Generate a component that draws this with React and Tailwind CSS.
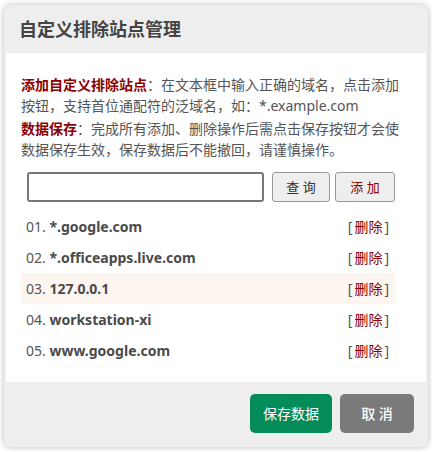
import React from "react";

const items = [
  "*.google.com",
  "*.officeapps.live.com",
  "127.0.0.1",
  "workstation-xi",
  "www.google.com",
];

export default function App() {
  return (
    <div className="w-[432px] h-[452px] bg-white pt-[5px] pl-[4px] font-['Noto_Sans','Noto_Sans_CJK_SC',sans-serif]">
      <div className="w-[424px] h-[442px] bg-[#eeeeee] rounded-[7px] shadow-[0_0_6px_rgba(0,0,0,0.28)] flex flex-col overflow-hidden">
        <div className="h-[48px] flex items-center pl-[15px] text-[18px] font-bold text-[#444444] leading-none">
          自定义排除站点管理
        </div>
        <div className="mx-[2px] bg-white pt-[21px] pb-[16px] pl-[15px] pr-[14px]">
          <p className="text-[14px] leading-[21px] text-[#555555]">
            <span className="text-[#8b0000] font-bold">添加自定义排除站点</span>：在文本框中输入正确的域名，点击添加按钮，支持首位通配符的泛域名，如：*.example.com
          </p>
          <p className="mt-[2px] text-[14px] leading-[21px] text-[#555555]">
            <span className="text-[#8b0000] font-bold">数据保存</span>：完成所有添加、删除操作后需点击保存按钮才会使数据保存生效，保存数据后不能撤回，请谨慎操作。
          </p>
          <div className="mr-[17px]">
            <div className="mt-[12px] ml-[6px] flex items-center h-[30px]">
              <input className="w-[237px] h-[30px] border-2 border-[#777777] rounded-[3px] outline-none px-2 text-[14px]" />
              <button className="ml-[8px] w-[58px] h-[30px] bg-[#eeeeee] border border-[#999999] rounded-[3px] text-[13px] text-[#333333] leading-none">
                查 询
              </button>
              <button className="ml-[5px] w-[60px] h-[30px] bg-[#eeeeee] border border-[#999999] rounded-[3px] text-[13px] text-[#8b0000] leading-none">
                添 加
              </button>
            </div>
            <div className="mt-[9px]">
              {items.map((d, i) => (
                <div
                  key={d}
                  className={
                    "h-[31px] flex items-center justify-between pl-[5px] pr-[6px] " +
                    (i === 2 ? "bg-[#fdf5f0]" : "")
                  }
                >
                  <div className="text-[14px] leading-none text-[#555555]">
                    <span>0{i + 1}. </span>
                    <span className="font-bold text-[#4a4a4a]">{d}</span>
                  </div>
                  <div className="text-[14px] leading-none text-[#555555]">
                    [<span className="text-[#8b0000] px-[2px]">删除</span>]
                  </div>
                </div>
              ))}
            </div>
          </div>
        </div>
        <div className="flex-1 flex justify-end items-start pt-[12px] pr-[14px] gap-[8px]">
          <button className="w-[82px] h-[39px] rounded-[5px] bg-[#038c5a] text-white text-[14px] leading-none">
            保存数据
          </button>
          <button className="w-[74px] h-[39px] rounded-[5px] bg-[#7a7a7a] text-white text-[14px] leading-none font-medium">
            取 消
          </button>
        </div>
      </div>
    </div>
  );
}
